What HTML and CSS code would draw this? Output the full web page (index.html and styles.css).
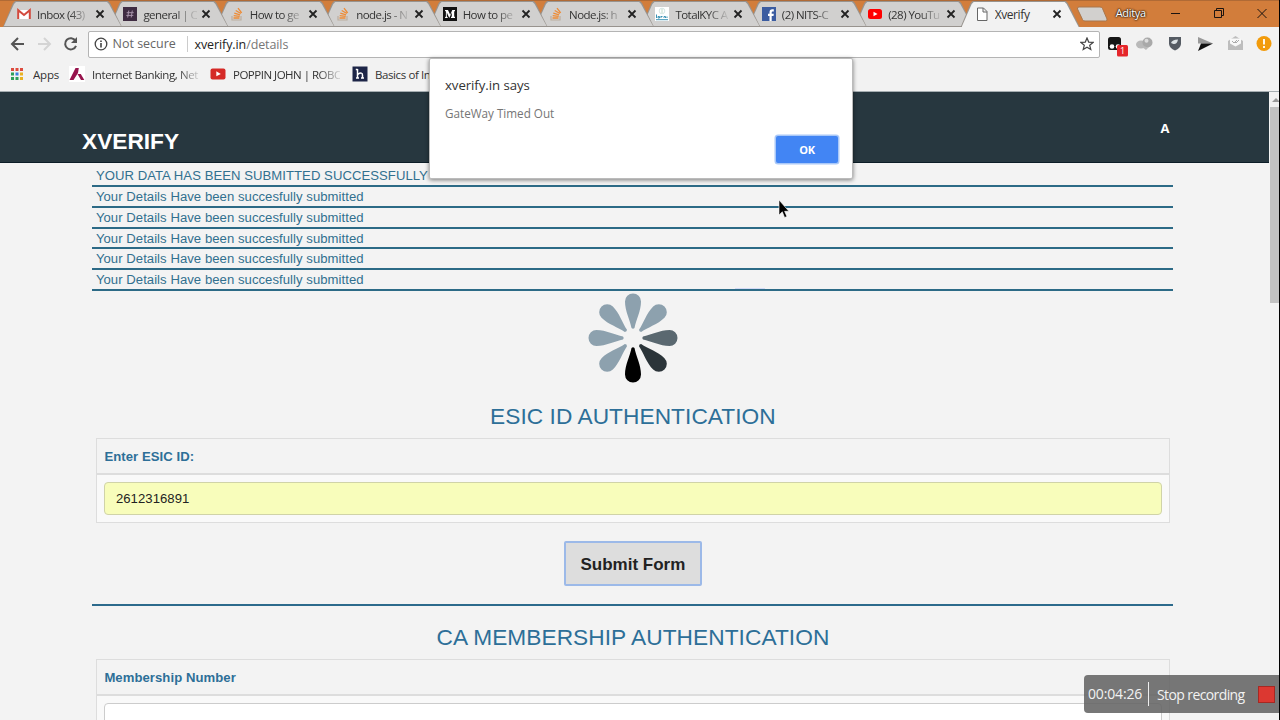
FILE: index.html
```
<!DOCTYPE html>
<html lang="en">
<head>
    <meta charset="UTF-8">
    <title>Xverify</title>
    <link rel="stylesheet" href="styles.css">
</head>

<body>

<svg class="defs">
    <symbol id="close" viewBox="0 0 10 10"><path d="M1.5 1.5 8.5 8.5M8.5 1.5 1.5 8.5" fill="none" stroke="#222" stroke-width="1.8"/></symbol>
    <symbol id="stack" viewBox="0 0 14 14">
        <path d="M2 9v4h9V9" fill="none" stroke="#bcae9f" stroke-width="1.2"/>
        <path d="M3.5 11h6M3.7 8.7l6 .7M4.3 6.1l5.8 1.7M5.7 3.5l5.2 3M8 1.2l3.7 4.6" fill="none" stroke="#ee8b35" stroke-width="1.3"/>
    </symbol>
    <symbol id="tube" viewBox="0 0 14 14"><rect y="2" width="14" height="10" rx="2.5" fill="#f00"/><path d="M5.5 4.8v4.4L9.5 7z" fill="#fff"/></symbol>
</svg>

<div class="tabs">
    <div class="tab">
        <svg class="icon" viewBox="0 0 14 14"><path d="M1 3h12v9H1z" fill="#fff"/><path d="M1.2 12V3.2L7 8l5.800-4.800V12" fill="none" stroke="#d34a3e" stroke-width="2"/></svg>
        <span class="title">Inbox (43)</span><svg class="x"><use href="#close"/></svg>
    </div>
    <div class="tab">
        <svg class="icon" viewBox="0 0 14 14"><path d="M0 0h14v14H0z" fill="#3f2c42"/><path d="M5.800 3.500 4.700 10.500M9.300 3.500 8.200 10.500M3.700 5.700h7M3.300 8.400h7" stroke="#a793aa"/></svg>
        <span class="title">general | C</span><svg class="x"><use href="#close"/></svg>
    </div>
    <div class="tab">
        <svg class="icon"><use href="#stack"/></svg>
        <span class="title">How to ge</span><svg class="x"><use href="#close"/></svg>
    </div>
    <div class="tab">
        <svg class="icon"><use href="#stack"/></svg>
        <span class="title">node.js - N</span><svg class="x"><use href="#close"/></svg>
    </div>
    <div class="tab">
        <svg class="icon" viewBox="0 0 14 14"><path d="M0 0h14v14H0z" fill="#111"/><path d="M2 3h3l2.200 4.800L9.300 3H12v1l-.8.5v5l.8.5v1H8v-1l.8-.5V5.500L6.300 11 3.800 5.500v4l1 .9v.6H2v-.6l.9-.9v-5L2 3.800z" fill="#fff"/></svg>
        <span class="title">How to pe</span><svg class="x"><use href="#close"/></svg>
    </div>
    <div class="tab">
        <svg class="icon"><use href="#stack"/></svg>
        <span class="title">Node.js: h</span><svg class="x"><use href="#close"/></svg>
    </div>
    <div class="tab">
        <svg class="icon" viewBox="0 0 14 14"><path d="M0 0h14v14H0z" fill="#fff"/><circle cx="7" cy="4" r="2.800" fill="none" stroke="#d5e6e4"/><path d="M7 2v4" stroke="#c0d8c8"/><path d="M1.500 7.500v3.500M3 9.500h1.500v1.500H3zM6 9.500h1.500M6 9v2M9 11V9.500h1.500V11M12 9.500v1.500M1 12.700h12" fill="none" stroke="#3b93b5"/></svg>
        <span class="title">TotalKYC A</span><svg class="x"><use href="#close"/></svg>
    </div>
    <div class="tab">
        <svg class="icon" viewBox="0 0 14 14"><path d="M0 0h14v14H0z" fill="#3b5ca0"/><path d="M7.500 14V9H6V6.800h1.500V5.200c0-1.900 1-2.900 2.800-2.900h1.500v2.100h-1c-.8 0-1.100.4-1.100 1.100v1.300h2.100L11.500 9H9.700v5z" fill="#fff"/></svg>
        <span class="title">(2) NITS-C</span><svg class="x"><use href="#close"/></svg>
    </div>
    <div class="tab">
        <svg class="icon"><use href="#tube"/></svg>
        <span class="title">(28) YouTu</span><svg class="x"><use href="#close"/></svg>
    </div>
    <div class="tab active">
        <svg class="icon" viewBox="0 0 14 14"><path d="M2.500 1h6l3.500 3.500V13.500H2.500zM8 1v4h4" fill="#fff" stroke="#666"/></svg>
        <span class="title">Xverify</span><svg class="x"><use href="#close"/></svg>
    </div>
    <svg class="new-tab" viewBox="0 0 32 16"><path d="M3 1h21q2 0 2.500 1.500L31 13q.5 2-1.500 2H9q-2 0-2.500-1.500L1.500 3Q1 1 3 1z" fill="#d2d0ce" stroke="#a8764c"/></svg>
    <span class="user">Aditya</span>
    <svg class="window-buttons" viewBox="0 0 100 24" fill="none" stroke="#1c1410">
        <path d="M2 12.500h9M47.500 9.500v-2h7v7h-2M45.500 9.500h7v7h-7zM88.500 8l9 9M97.500 8l-9 9"/>
    </svg>
</div>

<div class="toolbar">
    <svg class="nav" viewBox="0 0 80 30" fill="none" stroke="#555" stroke-width="2">
        <path d="M24 15H12.500M18 9l-6 6 6 6"/>
        <path d="M38 15h11.500M44 9l6 6-6 6" stroke="#d4d4d4"/>
        <path d="M75.500 11.800A5.600 5.600 0 1 0 76 16.800"/>
        <path d="M77 8v6h-6z" fill="#555" stroke="none"/>
    </svg>
    <div class="omnibox">
        <svg class="info" viewBox="0 0 14 14"><circle cx="7" cy="7" r="5.800" fill="none" stroke="#444" stroke-width="1.300"/><path d="M7 6v4.500M7 3.500v1.500" stroke="#444" stroke-width="1.600"/></svg>
        <span class="insecure">Not secure</span>
        <span class="url">xverify.in<span>/details</span></span>
        <svg class="star" viewBox="0 0 14 14"><path d="M7 1l1.700 4.100 4.400.3-3.400 2.900 1.100 4.300L7 10.300l-3.800 2.300 1.100-4.300L.9 5.400l4.400-.3z" fill="none" stroke="#444" stroke-width="1.200"/></svg>
    </div>
    <svg class="extensions" viewBox="0 0 176 30">
        <rect x="4" y="8" width="13" height="13" rx="2.500" fill="#151515"/>
        <circle cx="8" cy="17.500" r="2.300" fill="#fff"/><circle cx="14" cy="17.500" r="2.300" fill="#fff"/>
        <rect x="13" y="16" width="11" height="11.500" rx="1.500" fill="#e5262b"/>
        <text x="16" y="25.300" class="count">1</text>
        <ellipse cx="37" cy="15.500" rx="5" ry="4" fill="#b9b9b9"/><circle cx="43.500" cy="13.500" r="5" fill="#a9a9a9"/><circle cx="42.500" cy="11.800" r="2" fill="#ddd"/><path d="M38 18h7l-3 3z" fill="#bbb"/>
        <path d="M65 8h12v7q-.5 4-6 6.500-5.500-2.500-6-6.500z" fill="#555b63"/><path d="M67 14q1-3.500 7-3.500-1 5-4.500 4.500z" fill="#dce2e5"/>
        <path d="M94 8l15 6.500H94z" fill="#999"/><path d="M94 22l15-7.500H97z" fill="#111"/>
        <path d="M124 12l7.500-5 7.500 5v9h-15z" fill="#bdbdbd"/><path d="M126 9.500h11v5l-5.500 3-5.500-3z" fill="#f8f8f8"/><path d="M128 12l2 2 3-3M131 13l1 1 3-3" fill="none" stroke="#aaa"/>
        <circle cx="160" cy="14.500" r="7.500" fill="#f29b0b"/><path d="M160 10v5.500M160 17v2" stroke="#fff" stroke-width="1.800"/>
    </svg>
</div>

<div class="bookmarks">
    <svg class="apps" viewBox="0 0 14 14">
        <path d="M1 1h3v3H1z M5.500 1h3v3h-3z M10 1h3v3h-3z" fill="#dd4b3e"/>
        <path d="M1 5.500h3v3H1z" fill="#2f9e5b"/><path d="M5.500 5.500h3v3h-3z" fill="#3d7fe0"/><path d="M10 5.500h3v3h-3zM10 10h3v3h-3z" fill="#e9b221"/>
        <path d="M1 10h3v3H1zM5.500 10h3v3h-3z" fill="#2f9e5b"/>
    </svg>
    <span class="b-apps">Apps</span>
    <svg class="axis" viewBox="0 0 16 16"><path d="M0 0h16v16H0z" fill="#fff"/><path d="M6.500 2h3.300L9 7 4.500 14H.5zM8.500 8h3.300l3.500 6H12z" fill="#97144d"/></svg>
    <span class="b-bank">Internet Banking, Net</span>
    <svg class="play" viewBox="0 0 16 16"><rect x=".5" y="2.500" width="15" height="11" rx="2" fill="#d52a27"/><path d="M6.300 5.300v5L10.800 8z" fill="#fff"/></svg>
    <span class="b-pop">POPPIN JOHN | ROBO</span>
    <svg class="hacker" viewBox="0 0 16 16"><path d="M.5.500h15v15H.5z" fill="#1d2547"/><path d="M5.500 3v9M5.500 8.500q5-3 5 .5v3M3.800 3.500h1.700M4 12h3M9 12h3" fill="none" stroke="#fff" stroke-width="1.500"/></svg>
    <span>Basics of Int</span>
</div>

<div class="viewport">
    <div class="page">
        <header>
            <h1>XVERIFY</h1>
            <span class="avatar">A</span>
        </header>
        <main>
            <ul class="messages">
                <li>YOUR DATA HAS BEEN SUBMITTED SUCCESSFULLY</li>
                <li>Your Details Have been succesfully submitted</li>
                <li>Your Details Have been succesfully submitted</li>
                <li>Your Details Have been succesfully submitted</li>
                <li>Your Details Have been succesfully submitted</li>
                <li class="last">Your Details Have been succesfully submitted</li>
            </ul>
            <svg class="spinner" viewBox="-45 -45 90 90">
                <defs><path id="petal" d="M-1.500-10C-3-18-8-27-8-36.500a8 8 0 0 1 16 0C8-27 3-18 1.500-10q-1.500 1.500-3 0z"/></defs>
                <g fill="#8da1ae">
                    <use href="#petal"/>
                    <use href="#petal" transform="rotate(45)"/>
                    <use href="#petal" transform="rotate(225)"/>
                    <use href="#petal" transform="rotate(270)"/>
                    <use href="#petal" transform="rotate(315)"/>
                </g>
                <use href="#petal" transform="rotate(90)" fill="#5a6870"/>
                <use href="#petal" transform="rotate(135)" fill="#2b3439"/>
                <use href="#petal" transform="rotate(180)"/>
            </svg>

            <form class="esic">
                <h2>ESIC ID AUTHENTICATION</h2>
                <div class="table">
                    <label for="esic">Enter ESIC ID:</label>
                    <div class="cell"><input id="esic" class="filled" type="text" value="2612316891"></div>
                </div>
                <button class="submit" type="button">Submit Form</button>
            </form>
            <form class="member">
                <h2>CA MEMBERSHIP AUTHENTICATION</h2>
                <div class="table">
                    <label for="member">Membership Number</label>
                    <div class="cell"><input id="member" type="text"></div>
                </div>
            </form>
        </main>
    </div>
    <div class="scrollbar"><i></i><b></b></div>
</div>

<div class="dialog">
    <p class="says">xverify.in says</p>
    <p class="reason">GateWay Timed Out</p>
    <button type="button">OK</button>
</div>

<svg class="cursor" viewBox="0 0 12 20"><path d="M1 1v15l3.300-3.200L6.600 18.500l2.300-1-2.300-5.200h4.300z" stroke="#fff" stroke-width=".6"/></svg>

<div class="recorder">
    <span class="time">00:04:26</span>
    <span class="stop">Stop recording</span>
    <i></i>
</div>

</body>

</html>
```
FILE: styles.css
```
* {
    box-sizing: border-box;
}
body {
    margin:     0;
    width:      1280px;
    height:     720px;
    overflow:   hidden;
    display:    flex;
    flex-direction: column;
    border-right: 1px solid black;
    background: #f3f3f3;
    font-family: "Open Sans", "Noto Sans", sans-serif;
    font-size:  12px;
    color:      #333;
}
svg {
    flex:       none;
}
.defs {
    display:    none;
}

/* tab strip */
.tabs {
    height:     27px;
    flex:       none;
    display:    flex;
    padding-left: 3px;
    background: #d27d3b;
    border-top: 1px solid #b06a35;
}
.tab {
    position:   relative;
    width:      119px;
    margin-right: -12.600px;
    flex:       none;
    display:    flex;
    align-items: center;
    padding-left: 14px;
    isolation:  isolate;
}
.tab::before,
.tab::after {
    content:    '';
    position:   absolute;
    inset:      0;
    z-index:    -1;
    background: #98938e;
    clip-path:  polygon(0 100%, 10px 2px, 12px 0, 105px 0, 107px 2px, 100% 100%);
}
.tab::after {
    inset:      1px 1px 1px 1px;
    background: #d1d0cf;
    clip-path:  polygon(0 100%, 10px 2px, 12px 0, 103px 0, 105px 2px, 100% 100%);
}
/* each tab lies over the next one */
.tab:nth-child(1) { z-index: 9; }
.tab:nth-child(2) { z-index: 8; }
.tab:nth-child(3) { z-index: 7; }
.tab:nth-child(4) { z-index: 6; }
.tab:nth-child(5) { z-index: 5; }
.tab:nth-child(6) { z-index: 4; }
.tab:nth-child(7) { z-index: 3; }
.tab:nth-child(8) { z-index: 2; }
.tab:nth-child(9) { z-index: 1; }
.tab.active {
    margin-right: 0;
    z-index:    10;
}
.tab.active::after {
    bottom:     0;
    background: #f2f2f2;
}
.icon {
    width:      14px;
    height:     14px;
}
.title {
    width:      54px;
    margin-left: 6px;
    overflow:   hidden;
    white-space: nowrap;
    font-size:  11.500px;
    letter-spacing: -.55px;
    mask-image: linear-gradient(to right, black 60%, rgba(0,0,0,.15) 95%);
}
.active .title {
    mask-image: none;
    font-size:  12px;
    letter-spacing: -.4px;
}
.x {
    width:      10px;
    height:     10px;
    margin-left: 4px;
}
.active .x {
    margin-left: 3px;
}
.new-tab {
    width:      32px;
    height:     16px;
    margin:     5px 0 0 -4px;
}
.user {
    margin:     4px 0 0 8px;
    font-size:  11px;
    letter-spacing: -.3px;
    color:      white;
    text-shadow: 0 0 2px black, 0 0 2px black;
    width:      53px;
}
.window-buttons {
    width:      100px;
    height:     24px;
}

/* toolbar */
.toolbar {
    height:     33px;
    flex:       none;
    display:    flex;
    align-items: flex-start;
    background: #f2f2f2;
}
.nav {
    width:      80px;
    height:     30px;
    margin-top: 2px;
}
.omnibox {
    width:      1012px;
    height:     27px;
    flex:       none;
    margin:     4px 0 0 7.500px;
    display:    flex;
    align-items: center;
    padding:    0 5px 1px;
    background: white;
    border:     1px solid #b4b4b4;
    border-radius: 2px;
    font-size:  12.500px;
}
.info {
    width:      14px;
    height:     14px;
}
.insecure {
    width:      75px;
    margin-left: 5px;
    color:      #666;
    border-right: 1px solid #ccc;
    line-height: 16px;
    white-space: nowrap;
}
.url {
    margin-left: 7px;
    flex:       1;
    color:      #222;
    letter-spacing: -.1px;
}
.url span {
    color:      #777;
}
.star {
    width:      14px;
    height:     14px;
}
.extensions {
    width:      176px;
    height:     30px;
    margin:     2px 0 0 4px;
}
.count {
    font-size:  9px;
    fill:       white;
}

/* bookmarks bar */
.bookmarks {
    height:     32px;
    flex:       none;
    display:    flex;
    align-items: center;
    padding:    0 0 3px 10px;
    background: #f2f2f2;
    border-bottom: 1px solid #a5adb1;
    white-space: nowrap;
}
.bookmarks svg {
    width:      16px;
    height:     16px;
}
.bookmarks .apps {
    width:      14px;
    height:     14px;
}
.bookmarks span {
    overflow:   hidden;
    margin-left: 7px;
    font-size:  11.500px;
    letter-spacing: -.4px;
}
.bookmarks .b-apps {
    width:      28px;
    margin:     0 8px 0 9px;
    letter-spacing: -.2px;
}
.bookmarks .b-bank {
    width:      107px;
    margin-right: 11px;
    mask-image: linear-gradient(to right, black 80%, rgba(0,0,0,.15));
}
.bookmarks .b-pop {
    width:      107px;
    margin-right: 12px;
    letter-spacing: -.5px;
    mask-image: linear-gradient(to right, black 80%, rgba(0,0,0,.15));
}

/* web page */
.viewport {
    flex:       1;
    min-height: 0;
    display:    flex;
    font-family: "Liberation Sans", Arial, sans-serif;
}
.page {
    width:      1269px;
    overflow:   hidden;
}
header {
    height:     71px;
    display:    flex;
    justify-content: space-between;
    padding:    0 99px 0 82px;
    background: #27373f;
    border-bottom: 1px solid #0c1d27;
    color:      white;
}
h1 {
    margin:     36px 0 0;
    font-size:  22.700px;
    line-height: 26px;
}
.avatar {
    margin-top: 28px;
    font:       bold 13px/16px "Open Sans", sans-serif;
}
main {
    width:      1081px;
    margin-left: 92.400px;
    display:    flex;
    flex-direction: column;
    color:      #31708f;
}
.messages {
    list-style: none;
    margin:     0;
    padding:    3.400px 0 0;
    font-size:  13.120px;
    letter-spacing: .05px;
}
.messages li {
    height:     20.720px;
    padding-left: 3.500px;
    line-height: 20px;
    border-bottom: 2px solid #2c6a86;
}
.messages .last { /* a sliver of lavender on the last rule */
    background: linear-gradient(#d3daf5, #d3daf5) 643px 100% / 30px 1px no-repeat;
}
.spinner {
    width:      90px;
    height:     90px;
    margin:     2.300px auto 0;
}
form {
    display:    flex;
    flex-direction: column;
    align-items: center;
}
.esic {
    height:     223px;
    border-bottom: 2px solid #2c6a8c;
}
h2 {
    margin:     19px 0 8px;
    font-size:  22.700px;
    line-height: 28px;
    font-weight: normal;
    letter-spacing: .06px;
    color:      #2d6f98;
}
.member h2 {
    margin:     17px 0 8px;
}
.table {
    width:      1074px;
    flex:       none;
    border:     1px solid #ddd;
}
label {
    display:    block;
    height:     36px;
    padding-left: 7.500px;
    border-bottom: 2px solid #ddd;
    font-size:  13.120px;
    letter-spacing: .06px;
    font-weight: bold;
    line-height: 35px;
    color:      #2d6f98;
}
.cell {
    padding:    7px;
    background: #f9f9f9;
}
input {
    display:    block;
    width:      100%;
    height:     33px;
    padding:    0 11px;
    border:     1px solid #ccc;
    border-radius: 4px;
    background: white;
    font:       13.120px "Liberation Sans", Arial, sans-serif;
    letter-spacing: .06px;
    color:      #222;
}
.filled {
    background: #f8fdbb;
    border-color: #d0d3a8;
}
.submit {
    width:      138px;
    height:     45px;
    margin-top: 18px;
    padding:    2px 0 0;
    background: #ddd;
    border:     2px solid #9cb9e8;
    border-radius: 2px;
    font:       bold 17px "Liberation Sans", Arial, sans-serif;
    color:      #222;
}
.scrollbar {
    width:      9px;
    margin-left: 1.500px;
    background: #f1f1f1;
}
.scrollbar i {
    display:    block;
    margin:     6px 0 5px 2px;
    border:     4px solid transparent;
    border-top: 0;
    border-bottom-color: #999;
    width:      0;
}
.scrollbar b {
    display:    block;
    height:     196px;
    background: #c1c1c1;
}

/* alert box */
.dialog {
    position:   absolute;
    left:       429px;
    top:        58px;
    width:      424px;
    height:     121px;
    display:    flex;
    flex-direction: column;
    padding:    17px 14px 15px 15px;
    background: white;
    border:     1px solid #bbb;
    border-radius: 2px;
    box-shadow: 0 1px 4px rgba(0,0,0,.5);
}
.dialog p {
    margin:     0;
}
.says {
    font-size:  13.200px;
    line-height: 18px;
    letter-spacing: -.05px;
}
.dialog .reason {
    margin-top: 10px;
    font-size:  11.700px;
    line-height: 18px;
    color:      #757575;
}
.dialog button {
    align-self: flex-end;
    width:      62px;
    height:     28px;
    margin-top: 14px;
    background: #4285f4;
    border:     0;
    border-radius: 2px;
    box-shadow: 0 0 0 1.500px #a9c8f8;
    font:       bold 11px "Open Sans", sans-serif;
    letter-spacing: -.3px;
    color:      white;
}

.cursor {
    position:   absolute;
    left:       778px;
    top:        199px;
    width:      12px;
    height:     20px;
}

/* screen recorder */
.recorder {
    position:   absolute;
    left:       1084px;
    top:        675px;
    width:      195px;
    height:     38px;
    display:    flex;
    align-items: center;
    padding-left: 4px;
    background: rgba(100,100,100,.88);
    border-radius: 4px 0 0 4px;
    font-size:  14px;
    color:      #f2f2f2;
    white-space: nowrap;
}
.time {
    width:      61px;
    line-height: 24px;
    border-right: 1px solid #eee;
    letter-spacing: -.15px;
}
.stop {
    width:      101px;
    margin-left: 8px;
    letter-spacing: -.6px;
}
.recorder i {
    width:      17px;
    height:     17px;
    background: #dc3831;
    border:     1px solid #a72822;
}
```
